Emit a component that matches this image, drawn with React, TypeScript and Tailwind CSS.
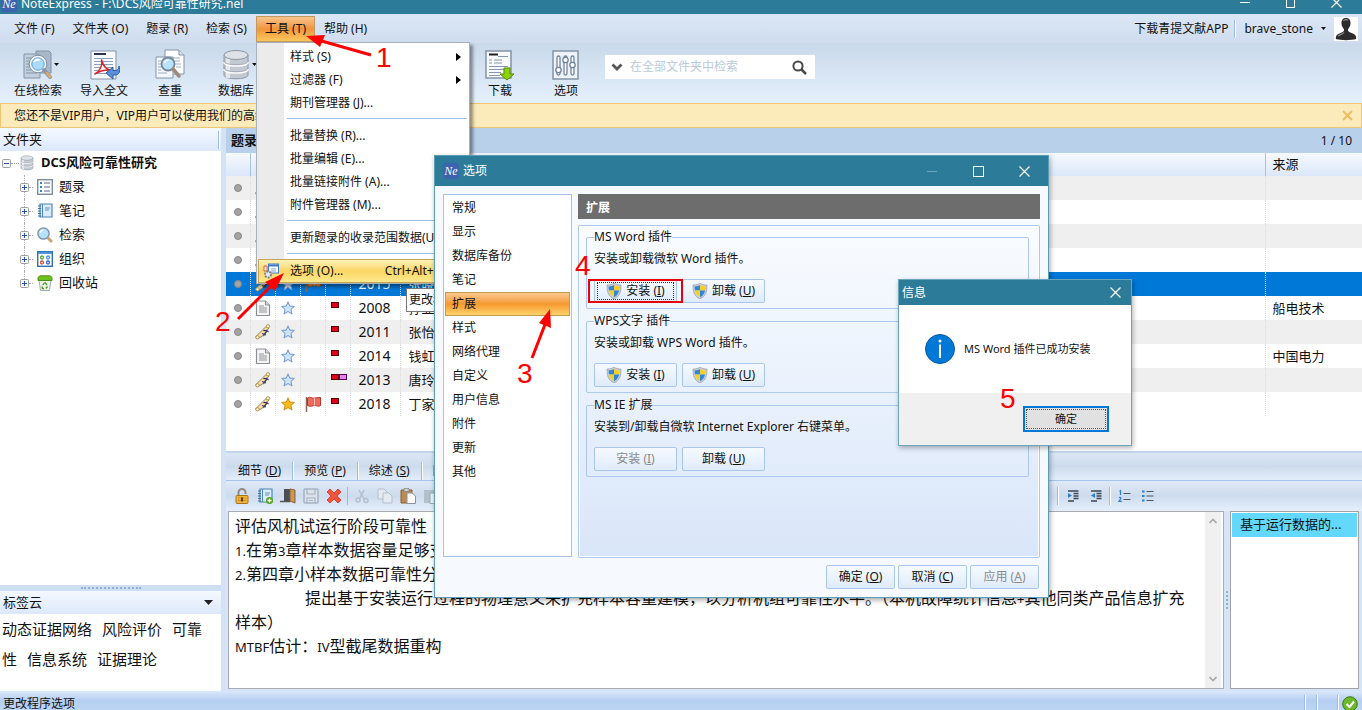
import type { ReactNode } from "react";
import clsx from "clsx";

const menus = ["文件 (F)", "文件夹 (O)", "题录 (R)", "检索 (S)", "工具 (T)", "帮助 (H)"];

const rows = [
  { kind: "scroll", year: "2012", author: "李强", source: "", marks: 1 },
  { kind: "scroll", year: "2010", author: "王勇", source: "", marks: 1 },
  { kind: "scroll", year: "2016", author: "刘洋", source: "", marks: 1 },
  { kind: "scroll", year: "2014", author: "陈明", source: "", marks: 1 },
  { kind: "scroll", year: "2015", author: "张晓", source: "", marks: 0, flag: true, selected: true },
  { kind: "page", year: "2008", author: "孙显", source: "船电技术", marks: 1 },
  { kind: "scroll", year: "2011", author: "张怡", source: "", marks: 1 },
  { kind: "page", year: "2014", author: "钱虹", source: "中国电力", marks: 1 },
  { kind: "scroll", year: "2013", author: "唐玲", source: "", marks: 2 },
  { kind: "scroll", year: "2018", author: "丁家", source: "", marks: 1, flag: true, starred: true },
];

const optionPages = ["常规", "显示", "数据库备份", "笔记", "扩展", "样式", "网络代理", "自定义", "用户信息", "附件", "更新", "其他"];

const plugins = [
  { title: "MS Word 插件", text: "安装或卸载微软 Word 插件。", shield: true, focused: true, installable: true },
  { title: "WPS文字 插件", text: "安装或卸载 WPS Word 插件。", shield: true, focused: false, installable: true },
  { title: "MS IE 扩展", text: "安装到/卸载自微软 Internet Explorer 右键菜单。", shield: false, focused: false, installable: false },
];

/* ---------- icons ---------- */

function OnlineSearchIcon() {
  return (
    <svg width="32" height="32" viewBox="0 0 32 32">
      <path d="M14 2h13l2 2v20h-15z" fill="#a9b8c8" stroke="#8394a8" />
      <path d="M2 5h14l2 2v22H2z" fill="#c2cfdc" stroke="#8394a8" />
      <path d="M4 9h8M4 12h6M4 15h5M4 18h6M4 21h9M4 24h11" stroke="#8495aa" />
      <circle cx="16" cy="15" r="7.5" fill="#a9dcfb" stroke="#f3f6fa" strokeWidth="3" />
      <circle cx="16" cy="15" r="8.8" fill="none" stroke="#7d8fa5" />
      <circle cx="16" cy="15" r="6.2" fill="none" stroke="#5b9bd0" />
      <path d="M12 13a5 5 0 0 1 6-2" stroke="#fff" strokeWidth="2" fill="none" />
      <path d="M22 21l6 7" stroke="#8898aa" strokeWidth="4" strokeLinecap="round" />
      <path d="M25 24l3 4" stroke="#e0a868" strokeWidth="2.5" strokeLinecap="round" />
    </svg>
  );
}

function ImportIcon() {
  return (
    <svg width="32" height="32" viewBox="0 0 32 32">
      <path d="M3 2h25v28H3z" fill="#f7f9fc" stroke="#8394a8" />
      <path d="M6 5h12" stroke="#26374c" strokeWidth="2" />
      <path d="M6 9.500h19M6 12.500h19M6 15.500h19M6 18.500h19M6 21.500h19M6 24.500h12" stroke="#8d9fb8" />
      <path d="M7 25c5-3 8-9 6.500-14 2 6 4 9.500 9 10-6-.5-11 1-15.500 4z" fill="#fff" stroke="#d8262c" strokeWidth="1.500" strokeLinejoin="round" />
      <path d="M31 17c0 3-1 4.500-4 4.500h-2v-3.500l-7 6 7 6v-4h2c4 0 6-4 4-9z" fill="#5b8ed8" stroke="#2b5da8" />
    </svg>
  );
}

function DuplicateIcon() {
  return (
    <svg width="32" height="32" viewBox="0 0 32 32">
      <path d="M11 1h14l5 5v19H11z" fill="#fff" stroke="#8394a8" />
      <path d="M25 1v5h5" fill="#d8e0ea" stroke="#8394a8" />
      <path d="M14 9h12M14 12h12M20 15h7M22 18h5" stroke="#9aacc4" />
      <path d="M2 8h17v21H2z" fill="#f4f7fb" stroke="#8394a8" />
      <path d="M4 12h3M4 15h3M4 18h3M4 21h3M4 24h9" stroke="#9aacc4" />
      <circle cx="14" cy="15" r="6.500" fill="#b9e2fb" stroke="#75879c" strokeWidth="1.800" />
      <path d="M10.500 14a4 4 0 0 1 4-3" stroke="#fff" strokeWidth="1.500" fill="none" />
      <path d="M19 20l6 7" stroke="#a08a78" strokeWidth="3.500" strokeLinecap="round" />
    </svg>
  );
}

function DatabaseIcon({ size = 32 }: { size?: number }) {
  return (
    <svg width={size} height={size} viewBox="0 0 32 32">
      <path d="M4 6v20c0 5 24 5 24 0V6z" fill="#c3c9d1" stroke="#8b95a2" />
      <path d="M8 8v21" stroke="#eef1f5" strokeWidth="4" opacity=".8" />
      <ellipse cx="16" cy="6" rx="12" ry="4.500" fill="#dde2e8" stroke="#8b95a2" />
      <path d="M4 13c0 5 24 5 24 0M4 20c0 5 24 5 24 0" fill="none" stroke="#fff" strokeWidth="2" />
      <path d="M4 12c0 5 24 5 24 0M4 19c0 5 24 5 24 0" fill="none" stroke="#9aa3af" />
    </svg>
  );
}

function DownloadIcon() {
  return (
    <svg width="32" height="32" viewBox="0 0 32 32">
      <path d="M2 2h25v27H2z" fill="#f8fafd" stroke="#8394a8" strokeWidth="1.500" />
      <path d="M5 5.500h9" stroke="#222" strokeWidth="2" />
      <path d="M14 7.500h10M5 11h3M10 11h8M5 14h3M10 14h8M5 17.500h19M5 20.500h15M5 23.500h12M5 26.500h11" stroke="#8798b4" strokeWidth="1.200" />
      <path d="M20 19h6v6h4l-7 6-7-6h4z" fill="#8fd400" stroke="#4f8a00" />
    </svg>
  );
}

function SlidersIcon() {
  return (
    <svg width="32" height="32" viewBox="0 0 32 32">
      <path d="M3 2h25v28H3z" fill="#eef3f9" stroke="#8394a8" strokeWidth="1.500" />
      <g fill="#fff" stroke="#71849b" strokeWidth="1.300">
        <rect x="7" y="7" width="3" height="19" rx="1.500" />
        <rect x="14" y="7" width="3" height="19" rx="1.500" />
        <rect x="21" y="7" width="3" height="19" rx="1.500" />
        <circle cx="8.500" cy="21" r="2.700" />
        <circle cx="15.500" cy="11" r="2.700" />
        <circle cx="22.500" cy="16" r="2.700" />
      </g>
    </svg>
  );
}

function Shield() {
  return (
    <svg width="16" height="16" viewBox="0 0 16 16">
      <path d="M8 0c2 1.500 4 2 7 2 0 7-1 11-7 14C2 13 1 9 1 2c3 0 5-.500 7-2z" fill="#c9ced4" stroke="#8b929b" strokeWidth=".6" />
      <path d="M8 2v5.500H3C2.700 6 2.600 5 2.600 3.500 5 3.400 6.500 3 8 2z" fill="#2f86dc" />
      <path d="M8 2v5.500h5c.3-1.500.4-2.500.4-4C11 3.400 9.500 3 8 2z" fill="#f8d022" />
      <path d="M8 7.500v6.800C5 12.700 3.600 10.500 3 7.500z" fill="#f8d022" />
      <path d="M8 7.500v6.800c3-1.600 4.400-3.800 5-6.800z" fill="#2f86dc" />
    </svg>
  );
}

function Expander({ open }: { open?: boolean }) {
  return (
    <svg width="9" height="9" viewBox="0 0 9 9">
      <rect x=".5" y=".5" width="8" height="8" rx="1" fill="#f6f7f9" stroke="#9a9fa6" />
      <path d={open ? "M2 4.500h5" : "M2 4.500h5M4.500 2v5"} stroke="#2f4f9f" />
    </svg>
  );
}

function ListIcon() {
  return (
    <svg width="16" height="16" viewBox="0 0 16 16">
      <rect x=".7" y=".7" width="14.600" height="14.600" fill="#fafcfe" stroke="#7f8e9f" strokeWidth="1.400" />
      <path d="M7 4h6M7 8h6M7 12h6" stroke="#5d6d7f" strokeWidth="1.200" />
      <path d="M3 4h2M3 8h2M3 12h2" stroke="#2e86d2" strokeWidth="2" />
    </svg>
  );
}

function NotebookIcon({ plus }: { plus?: boolean }) {
  return (
    <svg width="16" height="16" viewBox="0 0 16 16">
      <path d="M3 1h12v13H3z" fill="#dcecfa" stroke="#4b86b8" strokeWidth="1.200" />
      <path d="M5.500 1v13" stroke="#4b86b8" />
      <path d="M1 3h3M1 5.500h3M1 8h3M1 10.500h3M1 13h3" stroke="#3f6f98" />
      <path d="M8 5h5M8 7h4" stroke="#5c93c4" />
      {plus && (
        <>
          <circle cx="12.500" cy="12.500" r="3.500" fill="#53a318" />
          <path d="M12.500 10.500v4M10.500 12.500h4" stroke="#fff" strokeWidth="1.300" />
        </>
      )}
    </svg>
  );
}

function LensIcon() {
  return (
    <svg width="16" height="16" viewBox="0 0 16 16">
      <circle cx="6.500" cy="6.500" r="5.600" fill="#b5e2fb" stroke="#8298ae" strokeWidth="1.500" />
      <path d="M3.500 6a3 3 0 0 1 3-3" stroke="#fff" strokeWidth="1.500" fill="none" />
      <path d="M11.500 11.500l2.500 2.500" stroke="#c9a368" strokeWidth="3" strokeLinecap="round" />
    </svg>
  );
}

function OrganizeIcon() {
  return (
    <svg width="16" height="16" viewBox="0 0 16 16">
      <rect x=".7" y=".7" width="14.600" height="14.600" fill="#fff" stroke="#2d72b4" strokeWidth="1.400" />
      <path d="M1 2h14" stroke="#4c95d6" strokeWidth="2" />
      <circle cx="5" cy="6.500" r="1.500" fill="#fff" stroke="#5ca52a" strokeWidth="1.300" />
      <circle cx="11" cy="6.500" r="1.500" fill="#fff" stroke="#4a8fd0" strokeWidth="1.300" />
      <circle cx="5" cy="11.500" r="1.500" fill="#fff" stroke="#d8512f" strokeWidth="1.300" />
      <circle cx="11" cy="11.500" r="1.500" fill="#fff" stroke="#3a61c4" strokeWidth="1.300" />
    </svg>
  );
}

function RecycleIcon() {
  return (
    <svg width="16" height="16" viewBox="0 0 16 16">
      <path d="M2 5h12l-1.500 10.500h-9z" fill="#eef2ee" stroke="#a3aca3" />
      <path d="M1 5.500V2.500L3 .8h10l2 1.700v3z" fill="#6fc01c" stroke="#4c9410" />
      <path d="M8 7.500l2 2.500M10.500 11.500L9 13.500M7 13.500H5.500L5 11.500M5.800 10L7.500 7.500" stroke="#4c9c20" strokeWidth="1.300" fill="none" />
    </svg>
  );
}

function ScrollIcon() {
  return (
    <svg width="16" height="16" viewBox="0 0 16 16">
      <path d="M11 2.500l3 1.500-7 8.500-5 2c-1.500-.5-1.500-1.500-.5-2.500z" fill="#f4dfae" stroke="#a2813f" />
      <circle cx="13" cy="2.300" r="1.700" fill="#fff6de" stroke="#a2813f" strokeWidth=".8" />
      <circle cx="2.500" cy="13.300" r="1.700" fill="#fff3d2" stroke="#a2813f" strokeWidth=".8" />
      <path d="M8.500 7c1.500-1.500 3.500 0 2.500 1.500s-3 2.500-2 3.500M11 6l2.500 2M7 9.500l4 1.500" stroke="#34345f" strokeWidth="1.200" fill="none" />
    </svg>
  );
}

function PageIcon() {
  return (
    <svg width="16" height="16" viewBox="0 0 16 16">
      <path d="M1.500 1h9l4 4v10.500h-13z" fill="#f6f6f6" stroke="#8d9094" strokeWidth="1.200" />
      <path d="M10.500 1v4h4" fill="#d9dbde" stroke="#8d9094" />
      <path d="M4 6h5M4 8h8M4 10h8M4 12h8" stroke="#8f9296" />
    </svg>
  );
}

function StarIcon({ gold }: { gold?: boolean }) {
  return (
    <svg width="14" height="14" viewBox="0 0 14 14">
      <path d="M7 .8l1.800 4.300 4.600.3-3.500 3 1.100 4.600L7 10.500 3 13l1.100-4.600-3.500-3 4.600-.3z" fill={gold ? "#fbbc18" : "#cfe3fb"} stroke={gold ? "#cf8d12" : "#6d95d2"} strokeLinejoin="round" />
    </svg>
  );
}

function FlagIcon({ orange }: { orange?: boolean }) {
  return (
    <svg width="16" height="16" viewBox="0 0 16 16">
      <path d="M1.500 1v15" stroke="#8a6a50" strokeWidth="1.500" />
      <path d="M2.500 2c3-2 5 1 7 0l6-.5v8c-3 2-5-1-7 0-2 1-4 1-6 0z" fill={orange ? "#ff8f3c" : "#ee6a5c"} stroke={orange ? "#c65a10" : "#b53329"} />
      <path d="M9.500 2v7.500" stroke="#fbc2b8" />
    </svg>
  );
}

function CloseGlyph({ size = 11 }: { size?: number }) {
  return (
    <svg width={size} height={size} viewBox="0 0 11 11">
      <path d="M.5.5l10 10M10.500.5l-10 10" stroke="currentColor" strokeWidth="1.200" />
    </svg>
  );
}

function Logo() {
  return (
    <span className="flex h-4 w-4 shrink-0 items-center justify-center rounded-sm bg-[#3c62b0] font-['Liberation_Serif',serif] text-xs leading-4 italic text-white">Ne</span>
  );
}

function Caret() {
  return (
    <svg width="5" height="3" viewBox="0 0 5 3">
      <path d="M0 0h5L2.500 3z" fill="#111" />
    </svg>
  );
}

const editorIcons = [
  {
    label: "锁定",
    icon: (
      <svg width="16" height="16" viewBox="0 0 16 16">
        <path d="M4.500 8V4.500a3.500 3.500 0 0 1 7 0V6" fill="none" stroke="#8f8b80" strokeWidth="2" />
        <rect x="2" y="7.500" width="12" height="8" rx="1" fill="#f0b43c" stroke="#a9741a" />
        <path d="M4 10h8M4 12.500h8" stroke="#d08d1c" />
        <rect x="7" y="9.500" width="2" height="4" fill="#5c3b08" />
      </svg>
    ),
  },
  { label: "新建笔记", icon: <NotebookIcon plus /> },
  {
    label: "关闭",
    icon: (
      <svg width="16" height="16" viewBox="0 0 16 16">
        <path d="M4 1h7v12H4z" fill="#4b4f55" />
        <path d="M10 1l5 1v13l-5-2z" fill="#c9975a" stroke="#8c6230" />
        <path d="M0 13.500h10" stroke="#545454" strokeWidth="1.500" />
      </svg>
    ),
  },
  {
    label: "保存",
    icon: (
      <svg width="16" height="16" viewBox="0 0 16 16">
        <rect x="1" y="1" width="14" height="14" rx="1" fill="#dbe2ea" stroke="#a8b4c3" strokeWidth="1.500" />
        <path d="M4 1v5h8V1M4 15v-5h8v5M6 12.500h4" fill="none" stroke="#a8b4c3" strokeWidth="1.200" />
      </svg>
    ),
  },
  {
    label: "删除",
    icon: (
      <svg width="16" height="16" viewBox="0 0 16 16">
        <path d="M1 4l3-3 4 4 4-4 3 3-4 4 4 4-3 3-4-4-4 4-3-3 4-4z" fill="#f4533c" stroke="#d8452f" strokeLinejoin="round" />
      </svg>
    ),
  },
];

const clipIcons = [
  {
    label: "剪切",
    icon: (
      <svg width="16" height="16" viewBox="0 0 16 16" fill="none" stroke="#b3bfcd" strokeWidth="1.500">
        <path d="M5 2l5 9M10 2L6 10" />
        <circle cx="4" cy="12" r="2" />
        <circle cx="12" cy="12.500" r="2" />
      </svg>
    ),
  },
  {
    label: "复制",
    icon: (
      <svg width="16" height="16" viewBox="0 0 16 16" fill="#e3eaf2" stroke="#b3bfcd">
        <path d="M1 1h6l3 3v7H1z" />
        <path d="M6 5h6l3 3v7H6z" />
      </svg>
    ),
  },
  {
    label: "粘贴",
    icon: (
      <svg width="16" height="16" viewBox="0 0 16 16">
        <path d="M1 2h11v13H1z" fill="#bd8a52" stroke="#8a5f30" />
        <path d="M4 .5h5v3H4z" fill="#c8ccd1" stroke="#777" strokeWidth=".6" />
        <path d="M7 5h5l3.500 3v7.500H7z" fill="#fff" stroke="#8a94a2" />
      </svg>
    ),
  },
  {
    label: "选择性粘贴",
    icon: (
      <svg width="16" height="16" viewBox="0 0 16 16">
        <path d="M1 2h11v13H1z" fill="#b4bfcc" />
        <path d="M7 5h5l3.500 3v7.500H7z" fill="#eef2f7" stroke="#9aa7b6" />
      </svg>
    ),
  },
];

function IndentIcon({ flip }: { flip?: boolean }) {
  return (
    <svg width="14" height="14" viewBox="0 0 14 14">
      <path d="M2 2h10.500M7.500 4.500h5M7.500 7h5M7.500 9.500h5M2 12h6" stroke="#3b4654" strokeWidth="1.300" />
      <path d={flip ? "M6 4v5L2 6.500z" : "M2 4v5l4-2.500z"} fill="#2a7fd0" />
    </svg>
  );
}

function BulletsIcon({ numbered }: { numbered?: boolean }) {
  return (
    <svg width="14" height="14" viewBox="0 0 14 14">
      {numbered ? (
        <path d="M1.500 2.500l1-.8v4.300M1 8.800c1-1 2.500 0 1.500 1.300L1 12.300h2.800" fill="none" stroke="#2a7fd0" strokeWidth="1.200" />
      ) : (
        <path d="M1 2.500h2.500M1 7h2.500M1 11.500h2.500" stroke="#2a7fd0" strokeWidth="2" />
      )}
      <path d={numbered ? "M5.500 4.500h7M5.500 10.500h7" : "M5.500 2.500h7M5.500 7h7M5.500 11.500h7"} stroke="#4b5868" strokeWidth="1.200" />
    </svg>
  );
}

/* ---------- small parts ---------- */

function ToolButton({ label, children, arrow }: { label: string; children?: ReactNode; arrow?: boolean }) {
  return (
    <button className="relative flex w-[66px] flex-col items-center gap-0.5 pt-1.5">
      <span className="flex h-8 items-center">{children}</span>
      <span className="leading-4">{label}</span>
      {arrow && (
        <span className="absolute top-5 right-3">
          <Caret />
        </span>
      )}
    </button>
  );
}

function Divider() {
  return <span className="h-[18px] w-px shrink-0 bg-[#9bbbe2] shadow-[1px_0_0_white]" />;
}

// label with the access key underlined, e.g. 安装 (I)
function Keyed({ text, letter }: { text: string; letter: string }) {
  return (
    <span>
      {text} (<u>{letter}</u>)
    </span>
  );
}

function PushButton({ children, className, disabled }: { children: ReactNode; className: string; disabled?: boolean }) {
  return (
    <button
      disabled={disabled}
      className={clsx(
        "flex items-center justify-center gap-1 rounded-xs border border-[#a9c6ec] bg-linear-to-b from-[#f6faff] to-[#dfebfb]",
        disabled ? "text-[#8a8a8a]" : "text-[#111]",
        className
      )}
    >
      {children}
    </button>
  );
}

function MenuItem({ children, sub }: { children: ReactNode; sub?: boolean }) {
  return (
    <button className="flex h-[23px] items-center justify-between pr-2 pl-[33px] text-left whitespace-nowrap">
      {children}
      {sub && (
        <svg width="5" height="8" viewBox="0 0 5 8">
          <path d="M0 0l5 4-5 4z" fill="#000" />
        </svg>
      )}
    </button>
  );
}

function MenuLine() {
  return <div className="my-1 ml-[30px] mr-0.5 h-0.5 border-t border-[#9dbde2]" />;
}

function Latin({ children }: { children: ReactNode }) {
  return <span className="text-[13px] leading-none">{children}</span>;
}

/* ---------- main window ---------- */

function MenuBar() {
  return (
    <nav className="flex h-[29px] shrink-0 items-center bg-linear-to-b from-[#dbe7f5] to-[#cfddee] pr-1 pl-[5px]">
      {menus.map((m) => (
        <button
          key={m}
          className={clsx(
            "h-[26px] border px-2",
            m === "工具 (T)" ? "border-[#c09a60] bg-linear-to-b from-[#f8c48a] via-[#f0953c] to-[#fcc75c]" : "border-transparent"
          )}
        >
          {m}
        </button>
      ))}
      <div className="ml-auto flex items-center">
        <button className="pr-1.5">下载青提文献APP</button>
        <Divider />
        <button className="flex items-center gap-2 pr-2 pl-[9px]">
          brave_stone
          <Caret />
        </button>
        <svg width="24" height="24" viewBox="0 0 24 24">
          <path d="M0 0h24v24H0z" fill="#fff" />
          <path d="M12 1c3 0 4.800 2 4.500 5.500-.2 2-.7 3.500-2 5-.8 1-.8 2.500.5 3.300 1.500 1 4 1.700 5.500 2.700 1.300.9 1.700 2.500 1.700 4.500-5 1.500-15.400 1.500-20.400 0 0-2 .4-3.600 1.700-4.500 1.500-1 4-1.700 5.500-2.700 1.300-.8 1.300-2.300.5-3.300-1.300-1.500-1.800-3-2-5C7.200 3 9 1 12 1z" fill="#2c2c2c" />
          <path d="M9.500 4c1-1.500 3.500-1.800 4.500-.8M4 19c3-2 5-2 6-3.500" stroke="#8a8a8a" strokeWidth="1.300" fill="none" />
        </svg>
      </div>
    </nav>
  );
}

function Toolbar() {
  return (
    <div className="flex h-[60px] shrink-0 items-start bg-linear-to-b from-[#c9d9ea] to-[#e5f0fd] pl-[5px]">
      <ToolButton label="在线检索" arrow>
        <OnlineSearchIcon />
      </ToolButton>
      <ToolButton label="导入全文">
        <ImportIcon />
      </ToolButton>
      <ToolButton label="查重">
        <DuplicateIcon />
      </ToolButton>
      <ToolButton label="数据库" arrow>
        <DatabaseIcon />
      </ToolButton>
      <ToolButton label="标签" />
      <ToolButton label="引用" />
      <ToolButton label="青提" />
      <ToolButton label="下载">
        <DownloadIcon />
      </ToolButton>
      <ToolButton label="选项">
        <SlidersIcon />
      </ToolButton>
      <div className="mt-3 ml-1.5 flex h-6 w-[210px] items-center bg-white pr-2 pl-1.5">
        <svg width="12" height="8" viewBox="0 0 12 8">
          <path d="M1.500 1.500L6 6l4.500-4.500" fill="none" stroke="#555" strokeWidth="2.800" />
        </svg>
        <input aria-label="检索" placeholder="在全部文件夹中检索" className="min-w-0 flex-1 pl-[7px] outline-none placeholder:text-[#b9c9dc]" />
        <svg width="15" height="15" viewBox="0 0 15 15">
          <circle cx="6" cy="6" r="4.600" fill="none" stroke="#4a4a4a" strokeWidth="2" />
          <path d="M9.500 9.500l4.500 4.500" stroke="#4a4a4a" strokeWidth="2.500" />
        </svg>
      </div>
    </div>
  );
}

function Sidebar() {
  const nodes = [
    { name: "题录", icon: <ListIcon /> },
    { name: "笔记", icon: <NotebookIcon /> },
    { name: "检索", icon: <LensIcon /> },
    { name: "组织", icon: <OrganizeIcon /> },
    { name: "回收站", icon: <RecycleIcon /> },
  ];
  return (
    <aside className="flex w-[221px] shrink-0 flex-col bg-white text-[13px]">
      <div className="flex h-[23px] items-center justify-between bg-linear-to-b from-[#f4f9ff] to-[#dce8fa] pr-0.5 pl-[3px]">
        文件夹
        <Divider />
      </div>
      <div className="flex h-6 items-center pl-0.5">
        <Expander open />
        <span className="w-2 border-t border-dotted border-[#aaa]" />
        <DatabaseIcon size={16} />
        <span className="pl-1.5 font-bold">DCS风险可靠性研究</span>
      </div>
      <ul className="flex-1">
        {nodes.map((n) => (
          <li key={n.name} className="flex h-6 items-center pl-5">
            <span className="flex h-6 flex-col items-center">
              <span className="flex-1 border-l border-dotted border-[#aaa]" />
              <Expander />
              <span className={clsx("flex-1", n.name !== "回收站" && "border-l border-dotted border-[#aaa]")} />
            </span>
            <span className="mr-1 w-1 border-t border-dotted border-[#aaa]" />
            {n.icon}
            <span className="pl-1.5">{n.name}</span>
          </li>
        ))}
      </ul>
      <div className="flex h-1.5 items-center justify-center bg-[#cfdff2]">
        <span className="w-[60px] border-t-2 border-dotted border-[#8fb1dc]" />
      </div>
      <div className="flex h-[23px] items-center justify-between bg-linear-to-b from-[#f4f9ff] to-[#dce8fa] pr-2 pl-[3px]">
        标签云
        <svg width="9" height="5" viewBox="0 0 9 5">
          <path d="M0 0h9L4.500 5z" fill="#222" />
        </svg>
      </div>
      <div className="flex h-[77px] flex-wrap content-start gap-x-2.5 pl-0.5 text-[15px] leading-[30px]">
        <p>动态证据网络</p>
        <p>风险评价</p>
        <p>可靠</p>
        <p>性</p>
        <p>信息系统</p>
        <p>证据理论</p>
      </div>
    </aside>
  );
}

function RecordTable() {
  return (
    <div className="flex-1 bg-white">
      <table className="w-full table-fixed border-collapse text-[13px]">
        <colgroup>
          <col className="w-6" />
          <col className="w-[25px]" />
          <col className="w-[25px]" />
          <col className="w-[25px]" />
          <col className="w-[25px]" />
          <col className="w-[50px]" />
          <col />
          <col className="w-[97px]" />
        </colgroup>
        <thead>
          <tr className="h-[23px] bg-linear-to-b from-[#f6faff] to-[#dbe7f9] text-left">
            <th className="border-r border-[#a9c3e4] p-0" />
            <th className="p-0" />
            <th className="p-0" />
            <th className="p-0" />
            <th className="p-0" />
            <th className="p-0" />
            <th className="border-r border-[#a9c3e4] p-0" />
            <th className="p-0 pl-[7px] font-normal">来源</th>
          </tr>
        </thead>
        <tbody>
          {rows.map((r, i) => (
            <tr key={i} className={clsx("h-6", r.selected ? "bg-[#0078d7] text-white" : i % 2 ? "bg-white" : "bg-[#efefef]")}>
              <td className="border-r border-dotted border-[#ddd] p-0">
                <span className="mx-auto block h-2 w-2 rounded-full border border-[#888] bg-[#a3a3a3]" />
              </td>
              <td className="border-r border-dotted border-[#ddd] p-0 pl-1">{r.kind === "page" ? <PageIcon /> : <ScrollIcon />}</td>
              <td className="border-r border-dotted border-[#ddd] p-0 pl-[5px]">
                <StarIcon gold={r.starred} />
              </td>
              <td className="border-r border-dotted border-[#ddd] p-0 pl-1">{r.flag && <FlagIcon orange={r.selected} />}</td>
              <td className="border-r border-dotted border-[#ddd] p-0">
                <span className="flex pb-1.5 pl-[5px]">
                  {r.marks > 0 && <i className="h-1.5 w-2 border border-[#500] bg-[#e00018]" />}
                  {r.marks > 1 && <i className="h-1.5 w-2 border border-[#505] bg-[#e680f0]" />}
                </span>
              </td>
              <td className="border-r border-dotted border-[#ddd] p-0 pl-2 text-sm leading-5">{r.year}</td>
              <td className="border-r border-dotted border-[#ddd] p-0 pl-2 leading-5">{r.author}</td>
              <td className="p-0 pl-[7px] leading-5">{r.source}</td>
            </tr>
          ))}
        </tbody>
      </table>
    </div>
  );
}

function Editor() {
  return (
    <div className="flex h-[240px] shrink-0 flex-col bg-[#d5e4f7]">
      <div className="flex h-[29px] items-center gap-[11px] border-t-2 border-[#c3d5ea] bg-linear-to-b from-[#dbe6f4] via-[#ccdbec] to-[#e2edfb] pt-2 pl-3">
        <button>
          <Keyed text="细节" letter="D" />
        </button>
        <Divider />
        <button>
          <Keyed text="预览" letter="P" />
        </button>
        <Divider />
        <button>
          <Keyed text="综述" letter="S" />
        </button>
        <Divider />
        <button>
          <Keyed text="附件" letter="A" />
        </button>
      </div>
      <div className="flex h-[31px] items-center border-t border-[#a5c4ec] bg-linear-to-b from-[#dfe9f6] via-[#cddced] to-[#e5effc] pl-1">
        {editorIcons.map((b) => (
          <button key={b.label} aria-label={b.label} className="flex w-[23px] justify-center">
            {b.icon}
          </button>
        ))}
        <span className="px-0.5">
          <span className="block h-[18px] w-px bg-[#9bbbe2]" />
        </span>
        {clipIcons.map((b) => (
          <button key={b.label} aria-label={b.label} className="flex w-[23px] justify-center">
            {b.icon}
          </button>
        ))}
        <span className="w-[615px]" />
        <Divider />
        <button aria-label="增加缩进" className="ml-[3px] flex w-[23px] justify-center">
          <IndentIcon />
        </button>
        <button aria-label="减少缩进" className="mr-0.5 flex w-[23px] justify-center">
          <IndentIcon flip />
        </button>
        <Divider />
        <button aria-label="编号" className="ml-[3px] flex w-[23px] justify-center">
          <BulletsIcon numbered />
        </button>
        <button aria-label="项目符号" className="flex w-[23px] justify-center">
          <BulletsIcon />
        </button>
      </div>
      <div className="flex min-h-0 flex-1 pr-[3px] pb-0.5 pl-0.5">
        <div className="flex min-w-0 flex-1 border border-[#a8acb2] bg-white">
          <div
            role="textbox"
            aria-label="笔记内容"
            contentEditable
            suppressContentEditableWarning
            className="min-w-0 flex-1 overflow-hidden pt-0.5 pl-1.5 text-base leading-6 whitespace-nowrap outline-none"
          >
            <p>评估风机试运行阶段可靠性</p>
            <p>
              <Latin>1.</Latin>在第<Latin>3</Latin>章样本数据容量足够支撑
            </p>
            <p>
              <Latin>2.</Latin>第四章小样本数据可靠性分析
            </p>
            <p className="pl-[70px]">
              提出基于安装运行过程的物理意义来扩充样本容量建模，以分析机组可靠性水平。（本机故障统计信息<Latin>+</Latin>其他同类产品信息扩充
            </p>
            <p>样本）</p>
            <p>
              <Latin>MTBF</Latin>估计：<Latin>IV</Latin>型截尾数据重构
            </p>
          </div>
          <div className="mr-0.5 flex w-4 flex-col items-center justify-between bg-[#f0f0f0] py-1.5">
            <svg width="8" height="6" viewBox="0 0 8 6">
              <path d="M.5 5L4 1.500 7.500 5" fill="none" stroke="#aaa" strokeWidth="1.700" />
            </svg>
            <svg width="8" height="6" viewBox="0 0 8 6">
              <path d="M.5 1L4 4.500 7.500 1" fill="none" stroke="#aaa" strokeWidth="1.700" />
            </svg>
          </div>
        </div>
        <div className="flex w-1.5 items-center justify-center">
          <span className="h-[18px] border-l-2 border-dotted border-[#8fb1dc]" />
        </div>
        <div className="w-[129px] border border-[#a0a4aa] bg-white p-px">
          <button className="h-6 w-full bg-[#63d8fc] pl-2 text-left text-[13px]">基于运行数据的...</button>
        </div>
      </div>
    </div>
  );
}

/* ---------- things floating over the window ---------- */

function ToolsMenu() {
  return (
    <div className="absolute top-[42px] left-[256px] flex w-[214px] flex-col border border-[#a8b0ba] bg-[linear-gradient(to_right,#ebebeb_27px,#ffffff_27px)] pt-0.5 shadow-[3px_3px_3px_rgba(0,0,0,0.4)]">
      <MenuItem sub>样式 (S)</MenuItem>
      <MenuItem sub>过滤器 (F)</MenuItem>
      <MenuItem>期刊管理器 (J)...</MenuItem>
      <MenuLine />
      <MenuItem>批量替换 (R)...</MenuItem>
      <MenuItem>批量编辑 (E)...</MenuItem>
      <MenuItem>批量链接附件 (A)...</MenuItem>
      <MenuItem>附件管理器 (M)...</MenuItem>
      <MenuLine />
      <MenuItem>更新题录的收录范围数据(U)</MenuItem>
      <MenuLine />
      <button className="mx-px flex h-6 items-center border border-[#c5a558] bg-linear-to-b from-[#fff2b8] via-[#fbd664] to-[#ffe88c] pr-6 pl-[3px] whitespace-nowrap">
        <svg width="17" height="16" viewBox="0 0 17 16">
          <rect x="6.500" y="1" width="10" height="9" fill="#fff" stroke="#3e78c8" />
          <path d="M6.500 2.500h10" stroke="#3e78c8" strokeWidth="2" />
          <path d="M9 6h5M9 8h5" stroke="#7ba3da" />
          <path d="M2 3h3v5H2z" fill="#fff" stroke="#d85d35" />
          <circle cx="6" cy="11.500" r="3" fill="#e8ebef" stroke="#7d858f" strokeWidth="2" strokeDasharray="2 1" />
        </svg>
        <span className="pl-[11px]">选项 (O)...</span>
        <span className="ml-auto">Ctrl+Alt+O</span>
      </button>
    </div>
  );
}

function OptionsDialog() {
  return (
    <section className="absolute top-[155px] left-[434px] w-[615px] border border-[#5a9fb6] bg-[#f6faff] shadow-[1px_2px_5px_rgba(0,0,0,0.35)]">
      <header className="flex h-[30px] items-center bg-[#2c7b98] pl-2 text-white">
        <Logo />
        <span className="flex-1 pl-1">选项</span>
        <span className="h-px w-2.5 bg-[#6fa8bc]" />
        <button aria-label="最大化" className="ml-9 h-[11px] w-[11px] border border-white" />
        <button aria-label="关闭" className="mr-[18px] ml-[35px]">
          <CloseGlyph />
        </button>
      </header>
      <div className="flex gap-1.5 px-2 pt-2">
        <ul className="h-[363px] w-[129px] border border-[#a9c3e8] bg-white pt-px">
          {optionPages.map((p) => (
            <li key={p} className="h-6 px-px">
              <button
                className={clsx(
                  "h-6 w-full border pl-1.5 text-left",
                  p === "扩展" ? "border-[#c29a4c] bg-linear-to-b from-[#fbc98e] via-[#f5992d] to-[#ffd36a]" : "border-transparent"
                )}
              >
                {p}
              </button>
            </li>
          ))}
        </ul>
        <div className="flex flex-1 flex-col gap-1.5">
          <h2 className="h-[25px] bg-[#6d6d6d] pl-2 leading-[27px] font-bold text-white">扩展</h2>
          <div className="flex h-[333px] flex-col gap-1 rounded-xs border border-[#adc8ee] bg-linear-to-b from-[#f9fcff] to-[#d9e6f9] pt-[3px] pr-2.5 pl-[7px] shadow-[inset_0_0_0_1px_white]">
            {plugins.map((p) => (
              <fieldset key={p.title} className="h-20 rounded-xs border border-[#adc8ee] px-[7px]">
                <legend className="leading-4">{p.title}</legend>
                <p className="pt-1.5 leading-4">{p.text}</p>
                <div className="mt-3 flex gap-[5px]">
                  <div className="relative">
                    <PushButton disabled={!p.installable} className="h-6 w-[83px]">
                      {p.shield && <Shield />}
                      <Keyed text="安装" letter="I" />
                    </PushButton>
                    {p.focused && (
                      <>
                        <span className="pointer-events-none absolute inset-[3px] border border-dotted border-[#333]" />
                        <span className="pointer-events-none absolute -inset-x-1.5 inset-y-0 border-2 border-[#e8000c]" />
                      </>
                    )}
                  </div>
                  <PushButton className="h-6 w-[83px]">
                    {p.shield && <Shield />}
                    <Keyed text="卸载" letter="U" />
                  </PushButton>
                </div>
              </fieldset>
            ))}
          </div>
        </div>
      </div>
      <footer className="flex justify-end gap-[3px] pt-[7px] pr-[9px] pb-2">
        <PushButton className="h-6 w-[69px]">
          <Keyed text="确定" letter="O" />
        </PushButton>
        <PushButton className="h-6 w-[69px]">
          <Keyed text="取消" letter="C" />
        </PushButton>
        <PushButton className="h-6 w-[69px]" disabled>
          <Keyed text="应用" letter="A" />
        </PushButton>
      </footer>
    </section>
  );
}

function InfoDialog() {
  return (
    <section className="absolute top-[279px] left-[898px] w-[234px] border border-[#6aa6ba] bg-white shadow-[1px_2px_5px_rgba(0,0,0,0.3)]">
      <header className="flex h-[25px] items-center justify-between bg-[#2c7b98] pr-2.5 pl-[3px] text-white">
        信息
        <button aria-label="关闭">
          <CloseGlyph />
        </button>
      </header>
      <div className="flex h-[88px] items-center gap-2 pl-[25px] text-[11px]">
        <svg width="32" height="32" viewBox="0 0 32 32">
          <circle cx="16" cy="16" r="14.500" fill="#0078d7" stroke="#0a5aa0" />
          <circle cx="16" cy="8" r="1.500" fill="#fff" />
          <path d="M16 11.500v13.500" stroke="#fff" strokeWidth="2" />
        </svg>
        MS Word 插件已成功安装
      </div>
      <footer className="flex h-[52px] items-center justify-end bg-[#f0f0f0] pr-[22px] text-[11px]">
        <button className="h-[26px] w-[86px] border-2 border-[#0078d7] bg-[#e1e1e1] p-px">
          <span className="flex h-full items-center justify-center border border-dotted border-[#555]">确定</span>
        </button>
      </footer>
    </section>
  );
}

function Callouts() {
  return (
    <div className="pointer-events-none absolute inset-0 font-['Liberation_Sans',sans-serif] text-[28px] leading-8 text-[#ff0000]">
      <svg width="700" height="420" viewBox="0 0 700 420" className="absolute top-0 left-0" fill="#ff0000" stroke="#ff0000">
        <path d="M371 55L318 40M238 319l34-34M532 358l14-36" strokeWidth="3" />
        <path d="M306 36l19-1-5 12z" stroke="none" />
        <path d="M284 273l-9 18-10-9z" stroke="none" />
        <path d="M550 309l1 19-12-5z" stroke="none" />
      </svg>
      <span className="absolute top-[42px] left-[376px]">1</span>
      <span className="absolute top-[306px] left-[215px]">2</span>
      <span className="absolute top-[358px] left-[517px]">3</span>
      <span className="absolute top-[250px] left-[575px]">4</span>
      <span className="absolute top-[383px] left-[1000px]">5</span>
    </div>
  );
}

export default function App() {
  return (
    <div className="relative flex h-screen flex-col overflow-hidden font-['Noto_Sans','Noto_Sans_CJK_SC',sans-serif] text-xs text-[#111]">
      <header className="flex h-3.5 shrink-0 items-end gap-1 overflow-hidden bg-[#2c7b98] pr-5 pb-0.5 pl-px text-white">
        <Logo />
        <span className="flex-1 leading-4 whitespace-nowrap">NoteExpress - F:\DCS风险可靠性研究.nel</span>
        <span className="mb-[9px] h-px w-2.5 bg-white" />
        <span className="mb-1 ml-8 h-[9px] w-[9px] border border-white" />
        <span className="mb-1 ml-8">
          <CloseGlyph />
        </span>
      </header>
      <MenuBar />
      <Toolbar />
      <div className="flex h-[25px] shrink-0 items-center justify-between border border-[#eec475] bg-[#fbebbb] pr-2 pl-[13px]">
        您还不是VIP用户，VIP用户可以使用我们的高级功能
        <button aria-label="关闭提示" className="text-[#f0bd62]">
          <svg width="11" height="11" viewBox="0 0 11 11">
            <path d="M1 1l9 9M10 1l-9 9" stroke="currentColor" strokeWidth="2.200" />
          </svg>
        </button>
      </div>
      <div className="flex min-h-0 flex-1">
        <Sidebar />
        <div className="w-[5px] bg-[#d3e2f6]" />
        <main className="flex min-w-0 flex-1 flex-col">
          <div className="flex h-[25px] shrink-0 items-center justify-between bg-[#b9d0eb] pr-2.5 pl-[5px]">
            <h1 className="text-[13px] font-bold">题录</h1>
            1 / 10
          </div>
          <RecordTable />
          <Editor />
        </main>
      </div>
      <footer className="flex h-[19px] shrink-0 items-center bg-linear-to-b from-[#dbe8fb] via-[#b5cff2] to-[#bcd5f5] pt-1.5 pr-1 pl-[3px] whitespace-nowrap">
        <span className="flex-1">更改程序选项</span>
        <span className="flex items-center">
          <Divider />
          <span className="w-[11px]" />
          <Divider />
          <span className="w-5" />
          <Divider />
          <svg width="16" height="16" viewBox="0 0 16 16" className="ml-1">
            <circle cx="8" cy="8" r="7.300" fill="#6cb82c" stroke="#3c7d12" />
            <path d="M4.500 8l3 3 4.500-5.500" fill="none" stroke="#fff" strokeWidth="2" />
          </svg>
        </span>
      </footer>

      <ToolsMenu />
      <div className="absolute top-[288px] left-[406px] border border-[#777] bg-white px-0.5 py-0.5 text-xs leading-[18px] whitespace-nowrap">更改程序选项</div>
      <OptionsDialog />
      <InfoDialog />
      <Callouts />
    </div>
  );
}
